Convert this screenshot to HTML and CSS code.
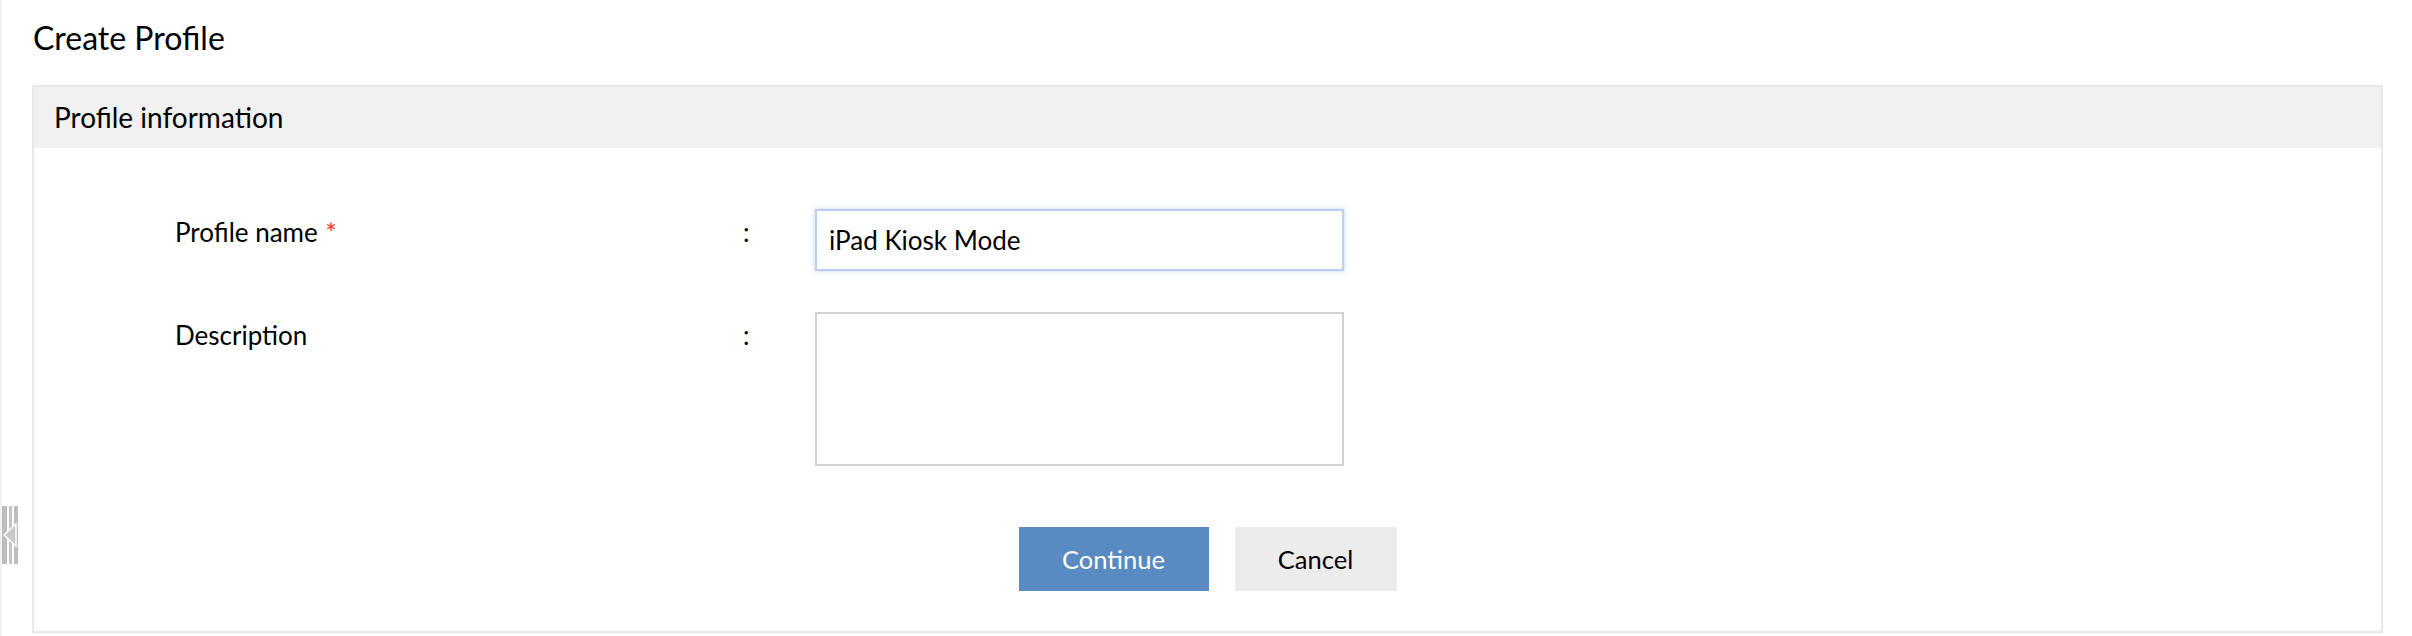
FILE: index.html
```html
<!DOCTYPE html>
<html lang="en">
<head>
<meta charset="utf-8">
<title>Create Profile</title>
<link rel="stylesheet" href="styles.css">
</head>
<body>
<div class="page">
  <h1 class="title">Create Profile</h1>
  <section class="panel">
    <div class="panel-head">Profile information</div>
    <div class="panel-body">
      <div class="form">
        <div class="label">Profile name <span class="req">*</span></div>
        <div class="colon">:</div>
        <div class="field"><input class="input" type="text" value="iPad Kiosk Mode"></div>
        <div class="label">Description</div>
        <div class="colon">:</div>
        <div class="field"><textarea class="textarea"></textarea></div>
      </div>
      <div class="actions">
        <button class="btn btn-primary" type="button">Continue</button>
        <button class="btn btn-secondary" type="button">Cancel</button>
      </div>
    </div>
  </section>
  <div class="handle">
    <svg width="16" height="58" viewBox="0 0 16 58">
      <rect x="0" y="0" width="5" height="58" fill="#bdbdbd"/>
      <rect x="7" y="0" width="3" height="58" fill="#c4c4c4"/>
      <rect x="12" y="0" width="4" height="58" fill="#bdbdbd"/>
      <polygon points="2,29 14,18 14,40" fill="#c9c9c9" stroke="#ffffff" stroke-width="1.5"/>
    </svg>
  </div>
</div>
</body>
</html>
```

FILE: styles.css
```css
html, body {
  margin: 0;
  padding: 0;
  background: #ffffff;
}

body {
  font-family: Lato, "Noto Sans", sans-serif;
  color: #000000;
}

.page {
  position: relative;
  min-height: 636px;
  box-sizing: border-box;
  border-left: 2px solid #f1f1f1;
  padding: 0 0 0 30px;
  width: 2412px;
}

.title {
  margin: 0;
  padding-top: 19px;
  padding-left: 1px;
  font-size: 32px;
  line-height: 38px;
  font-weight: 400;
  color: #000000;
}

.panel {
  margin-top: 28px;
  width: 2351px;
  box-sizing: border-box;
  border: 2px solid #e8e8e8;
}

.panel-head {
  height: 61px;
  line-height: 61px;
  background: #f1f1f1;
  padding-left: 20px;
  font-size: 28px;
  color: #000000;
}

.panel-body {
  padding: 61px 0 40px 0;
}

.form {
  display: grid;
  grid-template-columns: 568px 72px 529px;
  row-gap: 41px;
  padding-left: 141px;
}

.label {
  font-size: 26px;
  line-height: 32px;
  padding-top: 7px;
  color: #000000;
}

.req {
  color: #e8382f;
  font-size: 27px;
  line-height: 20px;
  vertical-align: top;
  position: relative;
  top: 7px;
  margin-left: 1px;
}

.colon {
  font-size: 26px;
  line-height: 32px;
  padding-top: 7px;
  color: #000000;
}

.input {
  display: block;
  width: 529px;
  height: 62px;
  box-sizing: border-box;
  border: 2px solid #b8cff0;
  box-shadow: 0 0 5px rgba(120, 160, 220, 0.45);
  padding: 0 12px;
  font-family: Lato, "Noto Sans", sans-serif;
  font-size: 26px;
  color: #000000;
  background: #ffffff;
  outline: none;
  margin: 0;
}

.textarea {
  display: block;
  width: 529px;
  height: 154px;
  box-sizing: border-box;
  border: 2px solid #d2d2d2;
  padding: 8px 12px;
  font-family: Lato, "Noto Sans", sans-serif;
  font-size: 26px;
  resize: none;
  margin: 0;
  outline: none;
}

.actions {
  display: flex;
  justify-content: center;
  gap: 26px;
  margin-top: 61px;
}

.btn {
  height: 64px;
  border: none;
  padding: 0;
  font-family: Lato, "Noto Sans", sans-serif;
  font-size: 25.5px;
  cursor: pointer;
  margin: 0;
}

.btn-primary {
  width: 190px;
  background: #5a8ac2;
  color: #ffffff;
}

.btn-secondary {
  width: 162px;
  background: #ececec;
  color: #000000;
}

.handle {
  position: absolute;
  left: 0;
  top: 506px;
  width: 16px;
  height: 58px;
}

.handle svg {
  display: block;
}
```
